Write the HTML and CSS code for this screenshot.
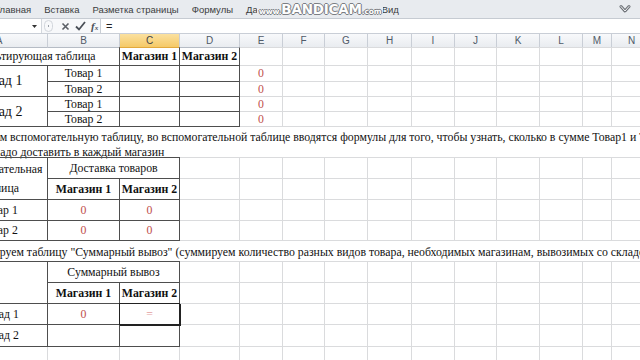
FILE: index.html
```html
<!DOCTYPE html>
<html lang="ru">

<head>
    <meta charset="UTF-8" />
    <meta name="viewport" content="width=device-width, initial-scale=1.0" />
    <title>Доставка товаров - Excel</title>
    <link rel="stylesheet" href="styles.css">
</head>

<body>

    <div class="ribbon">
        <nav class="tabs">
            <span>Главная</span>
            <span>Вставка</span>
            <span>Разметка страницы</span>
            <span>Формулы</span>
            <span>Данные</span>
            <span>Рецензирование</span>
            <span class="last">Вид</span>
        </nav>
        <span class="watermark"><small>www.</small>BANDICAM<small>.com</small></span>
        <svg class="fold" width="12" height="10" viewBox="0 0 12 10">
            <path d="M2 2.5 L6 7 L10 2.5" fill="none" stroke="#6f7379" stroke-width="3" stroke-linecap="round" stroke-linejoin="round" />
            <path d="M2 2.5 L6 7 L10 2.5" fill="none" stroke="#f4f5f7" stroke-width="1" stroke-linecap="round" stroke-linejoin="round" />
        </svg>
    </div>

    <div class="fbar">
        <div class="namebox">
            <svg class="drop" width="5" height="3" viewBox="0 0 5 3"><path d="M0 0 H5 L2.5 3 Z" fill="#333" /></svg>
        </div>
        <div class="grip"><span></span></div>
        <div class="fbtns">
            <svg width="9" height="9" viewBox="0 0 9 9"><path d="M1.5 1.5 L7.5 7.5 M7.5 1.5 L1.5 7.5" stroke="#5b5f66" stroke-width="1.6" /></svg>
            <svg width="11" height="10" viewBox="0 0 11 10"><path d="M1 5.5 L4 8.5 L10 1" fill="none" stroke="#4a4f57" stroke-width="1.8" /></svg>
            <span class="fx">f<small>x</small></span>
        </div>
        <div class="finput">=</div>
    </div>

    <div class="sheet">
        <!-- column headers -->
        <div class="hd">A</div><div class="hd">B</div><div class="hd sel">C</div><div class="hd">D</div><div class="hd">E</div><div class="hd">F</div><div class="hd">G</div><div class="hd">H</div><div class="hd">I</div><div class="hd">J</div><div class="hd">K</div><div class="hd">L</div><div class="hd">M</div><div class="hd">N</div>

        <!-- 1..5 фильтрующая таблица -->
        <div class="b t0 span2">Фильтирующая таблица</div><div class="b t0 bold">Магазин 1</div><div class="b t0 bold">Магазин 2</div><div></div><div></div><div></div><div></div><div></div><div></div><div></div><div></div><div></div><div></div>
        <div class="b rows2 big">Склад 1</div><div class="b">Товар 1</div><div class="b"></div><div class="b"></div><div class="red">0</div><div></div><div></div><div></div><div></div><div></div><div></div><div></div><div></div><div></div>
        <div class="b">Товар 2</div><div class="b"></div><div class="b"></div><div class="red">0</div><div></div><div></div><div></div><div></div><div></div><div></div><div></div><div></div><div></div>
        <div class="b rows2 big">Склад 2</div><div class="b">Товар 1</div><div class="b"></div><div class="b"></div><div class="red">0</div><div></div><div></div><div></div><div></div><div></div><div></div><div></div><div></div><div></div>
        <div class="b">Товар 2</div><div class="b"></div><div class="b"></div><div class="red">0</div><div></div><div></div><div></div><div></div><div></div><div></div><div></div><div></div><div></div>

        <!-- 6 пояснение -->
        <div class="txt two">
            <span class="l1">Создаем вспомогательную таблицу, во вспомогательной таблице вводятся формулы для того, чтобы узнать, сколько в сумме Товар1 и Товар2</span>
            <span class="l2">надо доставить в каждый магазин</span>
        </div>

        <!-- 7..10 вспомогательная таблица -->
        <div class="b rows2 wrap">Вспомогательная<br>таблица</div><div class="b span2">Доставка товаров</div><div></div><div></div><div></div><div></div><div></div><div></div><div></div><div></div><div></div><div></div><div></div>
        <div class="b bold">Магазин 1</div><div class="b bold">Магазин 2</div><div></div><div></div><div></div><div></div><div></div><div></div><div></div><div></div><div></div><div></div><div></div>
        <div class="b">Товар 1</div><div class="b red">0</div><div class="b red">0</div><div></div><div></div><div></div><div></div><div></div><div></div><div></div><div></div><div></div><div></div><div></div>
        <div class="b">Товар 2</div><div class="b red">0</div><div class="b red">0</div><div></div><div></div><div></div><div></div><div></div><div></div><div></div><div></div><div></div><div></div><div></div>

        <!-- 11 пояснение -->
        <div class="txt one">Формируем таблицу "Суммарный вывоз" (суммируем количество разных видов товара, необходимых магазинам, вывозимых со складов)</div>

        <!-- 12..15 суммарный вывоз -->
        <div class="b rows2"></div><div class="b span2">Суммарный вывоз</div><div></div><div></div><div></div><div></div><div></div><div></div><div></div><div></div><div></div><div></div><div></div>
        <div class="b bold">Магазин 1</div><div class="b bold">Магазин 2</div><div></div><div></div><div></div><div></div><div></div><div></div><div></div><div></div><div></div><div></div><div></div>
        <div class="b">Склад 1</div><div class="b red">0</div><div class="b active">=</div><div></div><div></div><div></div><div></div><div></div><div></div><div></div><div></div><div></div><div></div><div></div>
        <div class="b">Склад 2</div><div class="b"></div><div class="b"></div><div></div><div></div><div></div><div></div><div></div><div></div><div></div><div></div><div></div><div></div><div></div>

        <!-- 16 -->
        <div></div><div></div><div></div><div></div><div></div><div></div><div></div><div></div><div></div><div></div><div></div><div></div><div></div><div></div>
    </div>

</body>

</html>
```

FILE: styles.css
```css
body {
    margin: 0;
    width: 640px;
    height: 360px;
    overflow: hidden;
    background: #fff;
    font-family: "Liberation Sans", Arial, sans-serif;
}

/* ribbon tabs */
.ribbon {
    position: relative;
    display: flex;
    align-items: center;
    height: 18px;
    background: #e8ebef;
    border-bottom: 1px solid #c6cbd2;
}

.tabs {
    display: flex;
    gap: 13px;
    margin-left: -5px;
    font: 9.5px "Liberation Sans", Arial, sans-serif;
    color: #3b3d40;
    white-space: nowrap;
}

.tabs .last {
    margin-left: 2px;
}

.watermark {
    position: absolute;
    left: 257px;
    top: 1px;
    height: 16px;
    line-height: 16px;
    padding: 0 2px;
    background: #e8ebef;
    font: 700 13.5px "DejaVu Sans", sans-serif;
    letter-spacing: -0.2px;
    color: #fdfdfd;
    text-shadow: 1px 0 #7b7e83, -1px 0 #7b7e83, 0 1px #7b7e83, 0 -1px #7b7e83;
}

.watermark small {
    font-size: 7.5px;
}

.fold {
    margin-left: auto;
    margin-right: 9px;
}

/* formula bar */
.fbar {
    display: flex;
    height: 14px;
    background: #f7f8fa;
    border-bottom: 1px solid #dde1e6;
}

.namebox {
    position: relative;
    width: 41px;
    background: #fff;
    border-right: 1px solid #d3d7dd;
}

.drop {
    position: absolute;
    right: 4px;
    top: 6px;
}

.grip {
    width: 7px;
    margin: 1px 0 1px 2px;
    border: 1px solid #d2d6dc;
    border-radius: 6px;
    display: flex;
    align-items: center;
    justify-content: center;
}

.grip span {
    width: 1px;
    height: 2px;
    background: #9aa0a8;
}

.fbtns {
    display: flex;
    align-items: center;
    gap: 5px;
    width: 48px;
    padding-left: 8px;
    box-sizing: border-box;
    border-right: 1px solid #c9ced5;
}

.fx {
    font: italic 700 11px "Liberation Serif", serif;
    color: #4a4f57;
}

.fx small {
    font-size: 7px;
}

.finput {
    flex: 1;
    background: #fff;
    padding-left: 5px;
    font: 11px "Liberation Sans", Arial, sans-serif;
    line-height: 14px;
    color: #222;
}

/* sheet */
.sheet {
    display: grid;
    grid-template-columns: 97px 72px 60px 60px 43px 42px 43px 44px 43px 42px 43px 43px 29px 40px;
    grid-template-rows: 14px 18px 16px 15px 15px 15px 31px 21px 21px 21px 20px 21px 21px 21px 21px 22px 21px;
    margin-left: -49px;
    font: 11.8px "Liberation Serif", "Times New Roman", serif;
    color: #111;
}

.sheet > div {
    margin: -1px 0 0 -1px;
    border: 1px solid #dadbdd;
    display: flex;
    align-items: center;
    justify-content: center;
    white-space: nowrap;
    min-width: 0;
}

.sheet > .hd {
    border-color: #c9ced6;
    border-bottom-color: #b6bcc5;
    background: linear-gradient(#f8f9fb, #e9ecf0);
    font: 10px "Liberation Sans", Arial, sans-serif;
    color: #505a68;
}

.sheet > .sel {
    background: linear-gradient(#fbe1a0, #f5c967);
    border-bottom-color: #e2a93d;
    color: #40444a;
}

.sheet > .b {
    border-color: #4e4e4e;
    z-index: 1;
}

.sheet > .t0 {
    border-top-color: transparent;
}

.span2 {
    grid-column: span 2;
}

.rows2 {
    grid-row: span 2;
}

.bold {
    font-weight: 700;
}

.big {
    font-size: 14px;
}

.red {
    color: #c0504d;
}

.wrap {
    white-space: normal;
    text-align: center;
    line-height: 19px;
}

.sheet > .txt {
    grid-column: 1 / -1;
    border-color: transparent;
    justify-content: flex-start;
    padding-left: 14px;
}

.sheet > .two {
    display: block;
    padding-top: 3px;
}

.two span {
    display: block;
    height: 15px;
    line-height: 15px;
}

.two .l2 {
    margin-left: 29px;
}

.sheet > .one {
    align-items: flex-end;
    line-height: 15px;
    padding-bottom: 1px;
}

.sheet > .active {
    border-color: #222;
    box-shadow: 1px 1px 0 #222;
    z-index: 2;
    color: #e3a2a2;
}
```
